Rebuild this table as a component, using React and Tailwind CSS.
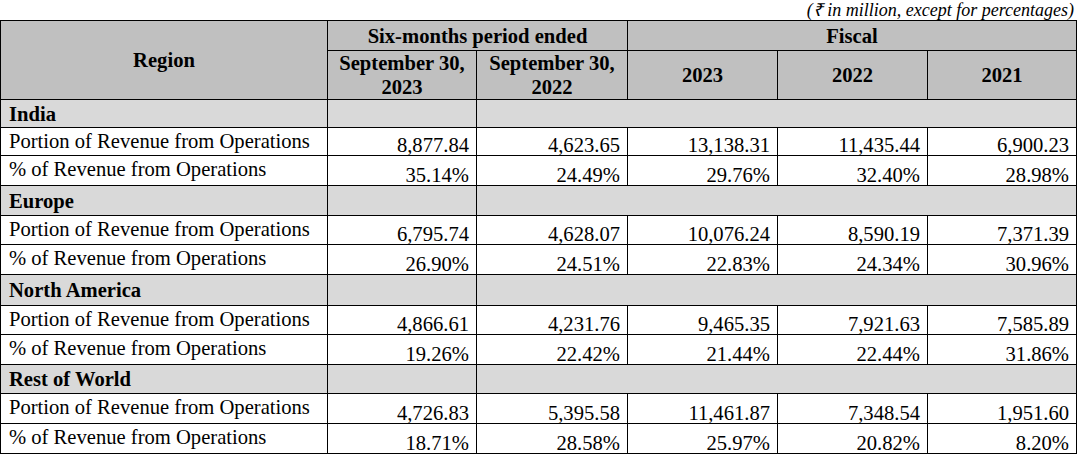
import React from 'react'

// 지역별 매출 표
const regions = [
  {
    name: 'India',
    h: ['h-[28px]', 'h-[28px]', 'h-[30px]'],
    portion: ['8,877.84', '4,623.65', '13,138.31', '11,435.44', '6,900.23'],
    pct: ['35.14%', '24.49%', '29.76%', '32.40%', '28.98%'],
  },
  {
    name: 'Europe',
    h: ['h-[30px]', 'h-[29px]', 'h-[30px]'],
    portion: ['6,795.74', '4,628.07', '10,076.24', '8,590.19', '7,371.39'],
    pct: ['26.90%', '24.51%', '22.83%', '24.34%', '30.96%'],
  },
  {
    name: 'North America',
    h: ['h-[31px]', 'h-[29px]', 'h-[30px]'],
    portion: ['4,866.61', '4,231.76', '9,465.35', '7,921.63', '7,585.89'],
    pct: ['19.26%', '22.42%', '21.44%', '22.44%', '31.86%'],
  },
  {
    name: 'Rest of World',
    h: ['h-[29px]', 'h-[30px]', 'h-[30px]'],
    portion: ['4,726.83', '5,395.58', '11,461.87', '7,348.54', '1,951.60'],
    pct: ['18.71%', '28.58%', '25.97%', '20.82%', '8.20%'],
  },
]

const cell = 'border border-black p-0'

function DataRow({ label, values, h }) {
  return (
    <tr className={h}>
      <td className={`${cell} align-top pl-[8px] pt-[1px] leading-[24px]`}>{label}</td>
      {values.map((v, i) => (
        <td key={i} className={`${cell} align-bottom text-right pr-[7px] leading-[19px]`}>
          {v}
        </td>
      ))}
    </tr>
  )
}

export default function App() {
  return (
    <div className="w-[1077px] h-[456px] overflow-hidden bg-white text-black font-['Liberation_Serif','Times_New_Roman',serif]">
      <div className="h-[20px] flex justify-end items-end pr-[3px] text-[18px] italic leading-[20px]">
        (₹ in million, except for percentages)
      </div>
      <table className="table-fixed border-collapse w-[1076px] text-[20.6px]">
        <colgroup>
          <col className="w-[327px]" />
          <col className="w-[149px]" />
          <col className="w-[151px]" />
          <col className="w-[150px]" />
          <col className="w-[150px]" />
          <col className="w-[149px]" />
        </colgroup>
        <thead className="font-bold bg-[#c0c0c0]">
          <tr className="h-[30px]">
            <th rowSpan={2} className={`${cell} text-center align-middle leading-[24px]`}>
              Region
            </th>
            <th colSpan={2} className={`${cell} text-center leading-[24px]`}>
              Six-months period ended
            </th>
            <th colSpan={3} className={`${cell} text-center leading-[24px]`}>
              Fiscal
            </th>
          </tr>
          <tr className="h-[49px]">
            <th className={`${cell} text-center leading-[24px]`}>
              September 30,
              <br />
              2023
            </th>
            <th className={`${cell} text-center leading-[24px]`}>
              September 30,
              <br />
              2022
            </th>
            <th className={`${cell} text-center leading-[24px]`}>2023</th>
            <th className={`${cell} text-center leading-[24px]`}>2022</th>
            <th className={`${cell} text-center leading-[24px]`}>2021</th>
          </tr>
        </thead>
        <tbody>
          {regions.map((r) => (
            <React.Fragment key={r.name}>
              <tr className={`${r.h[0]} bg-[#d9d9d9]`}>
                <td className={`${cell} font-bold pl-[8px] align-middle leading-[24px]`}>{r.name}</td>
                <td className={cell}></td>
                <td colSpan={4} className={cell}></td>
              </tr>
              <DataRow label="Portion of Revenue from Operations" values={r.portion} h={r.h[1]} />
              <DataRow label="% of Revenue from Operations" values={r.pct} h={r.h[2]} />
            </React.Fragment>
          ))}
        </tbody>
      </table>
    </div>
  )
}
